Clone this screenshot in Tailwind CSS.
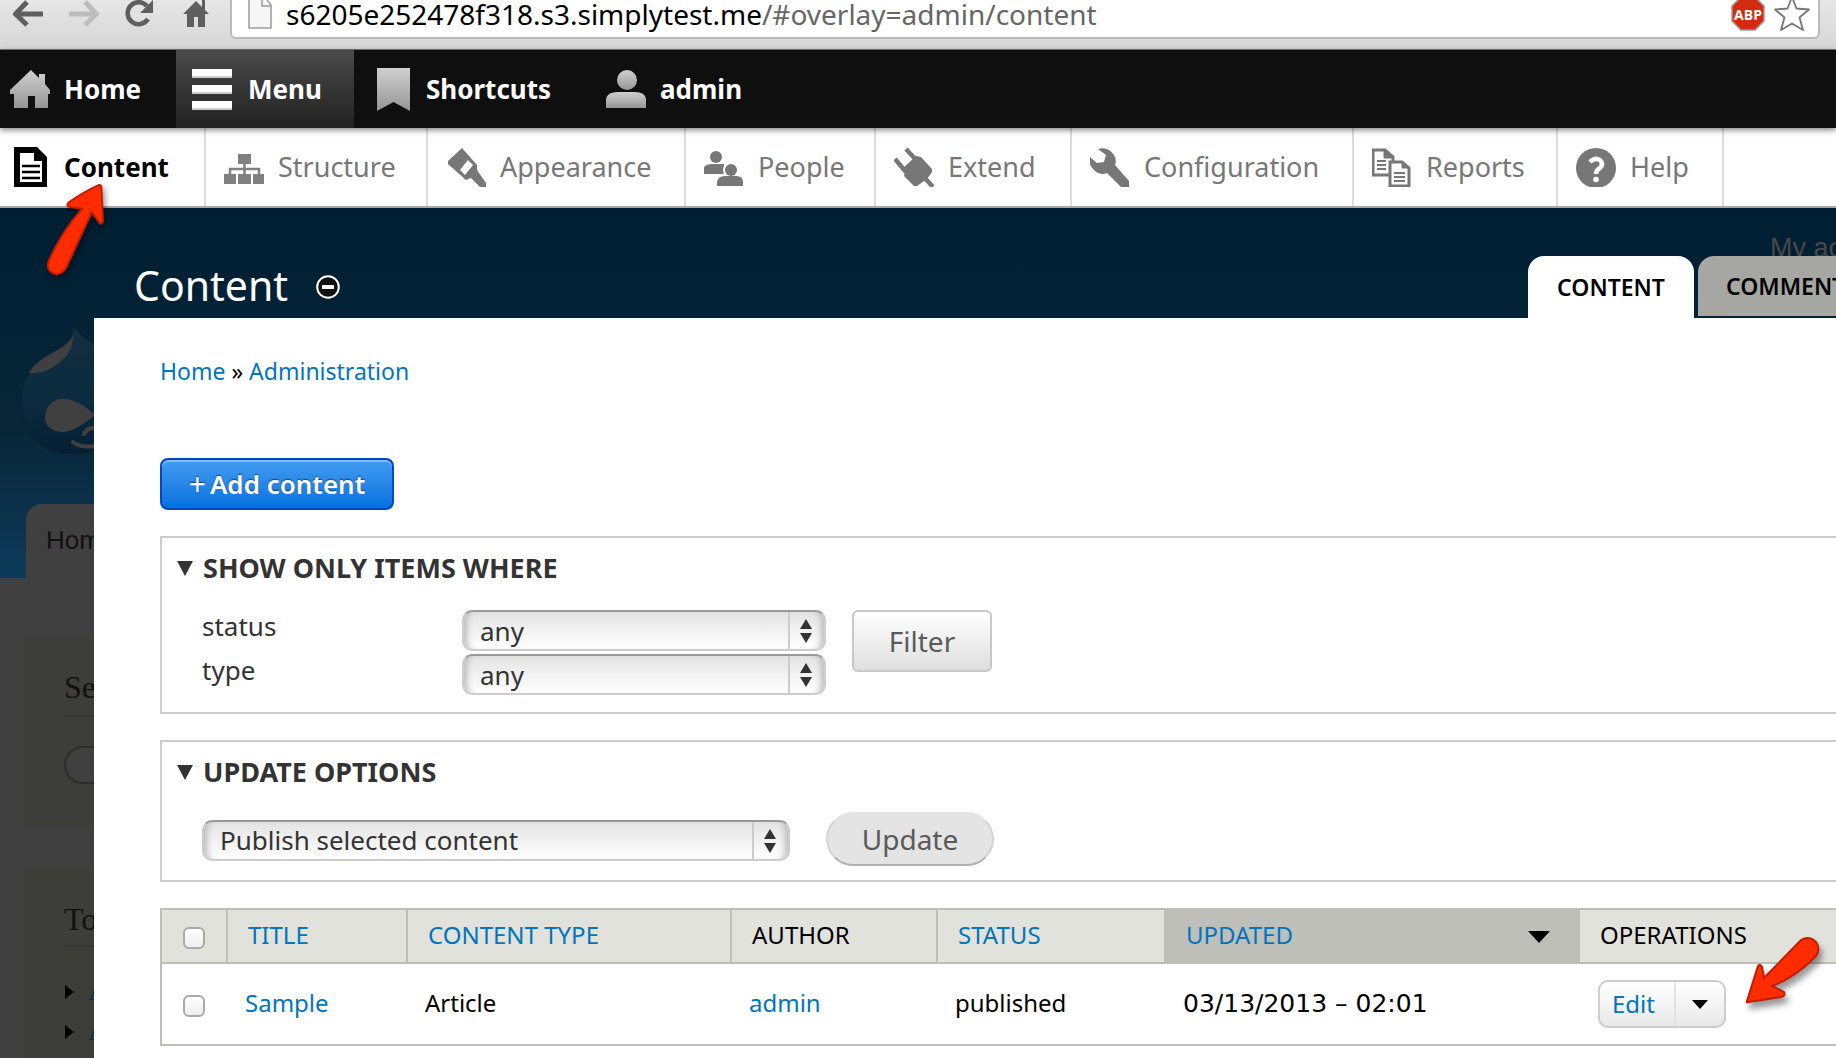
<!DOCTYPE html>
<html lang="en">
<head>
    <meta charset="UTF-8">
    <meta name="viewport" content="width=device-width, initial-scale=1.0">
    <title>Content | Administration</title>
    <script src="https://cdn.jsdelivr.net/npm/@tailwindcss/browser@4"></script>
</head>
<body class="relative min-h-screen overflow-hidden bg-[#404040] font-['Noto_Sans',sans-serif] text-black">

    <!-- Browser bar -->
    <div class="flex h-[50px] items-start overflow-hidden border-b border-[#777] bg-linear-to-b from-[#e6e6e6] to-[#d6d6d6] pl-3 pr-4">
        <div class="flex w-[218px] shrink-0 gap-6">
            <button aria-label="Back">
                <svg class="h-7 w-8" viewBox="0 0 32 28" fill="none" stroke="#5f5f5f" stroke-width="5"><path d="M3 14H31M15 2L3.500 14L15 25" stroke-linejoin="round"/></svg>
            </button>
            <button aria-label="Forward">
                <svg class="h-7 w-8" viewBox="0 0 32 28" fill="none" stroke="#bdbdbd" stroke-width="5"><path d="M1 14H28M17 2L28.500 14L17 25" stroke-linejoin="round"/></svg>
            </button>
            <button aria-label="Reload">
                <svg class="h-7 w-8" viewBox="0 0 32 28" fill="none"><path d="M24 19A11 11 0 1 1 23 6" stroke="#5f5f5f" stroke-width="4.500"/><path d="M29 0V13H16Z" fill="#5f5f5f"/></svg>
            </button>
            <button aria-label="Home page">
                <svg class="h-7 w-8" viewBox="0 0 32 28" fill="#5f5f5f"><path d="M16 1L22 7V0H25V10L29 14H25V27H18V17H14V27H7V14H3Z"/></svg>
            </button>
        </div>
        <div class="-mt-4 flex h-[55px] grow items-center rounded-md border-2 border-[#bbb] bg-white pl-4 pr-2 pt-1">
            <svg class="mr-[14px] h-[30px] w-6 shrink-0" viewBox="0 0 24 30"><path d="M1 -6H14L23 6V29H1Z" fill="#f6f6f6" stroke="#999" stroke-width="1.500"/><path d="M14 -3V7H23" fill="none" stroke="#999" stroke-width="1.500"/></svg>
            <div class="grow whitespace-nowrap text-[28px] leading-8" role="textbox" aria-label="Address" contenteditable="true" spellcheck="false">s6205e252478f318.s3.simplytest.me<span class="text-[#666]">/#overlay=admin/content</span></div>
            <button class="mr-2 shrink-0" aria-label="Adblock Plus">
                <svg class="h-9 w-9" viewBox="0 0 36 36"><path d="M11 1H25L34 10V25L25 34H11L2 25V10Z" fill="#d42a10" stroke="#999" stroke-width="1.500"/><text x="18" y="24" text-anchor="middle" font-family="Open Sans" font-size="14" font-weight="700" fill="#fff">ABP</text></svg>
            </button>
            <button class="shrink-0" aria-label="Bookmark this page">
                <svg class="h-9 w-9" viewBox="0 0 36 36"><path d="M18 1L22.500 12.500L35 13.500L25.500 21.500L29 34L18 27.500L7 34L10.500 21.500L1 13.500L13.500 12.500Z" fill="#fff" stroke="#777" stroke-width="1.800" stroke-linejoin="round"/></svg>
            </button>
        </div>
    </div>

    <!-- Toolbar -->
    <nav class="relative z-10 flex h-[78px] bg-[#0f0f0f] text-[26px] font-bold text-white shadow-[0_2px_6px_rgba(0,0,0,0.5)]">
        <svg class="absolute h-0 w-0"><defs><linearGradient id="grey" x1="0" y1="0" x2="0" y2="1"><stop offset="0" stop-color="#d0d0d0"/><stop offset="1" stop-color="#959595"/></linearGradient></defs></svg>
        <a href="#" class="flex w-[176px] shrink-0 items-center gap-[14px] pl-[10px]">
            <svg class="h-[38px] w-10" viewBox="0 0 40 38"><path d="M21 0L29 8V4H35V14L40 20V24H38V38H25V26H18V38H4V24H0V20Z" fill="url(#grey)"/></svg>
            Home
        </a>
        <a href="#" class="flex w-[178px] shrink-0 items-center gap-4 bg-linear-to-b from-[#4b4b4b] to-[#212121] pl-4">
            <svg class="h-[44px] w-10" viewBox="0 -2 40 44" fill="#fff"><path d="M0 0H40V9H0ZM0 16H40V25H0ZM0 32H40V41H0Z"/><path d="M0 7H40V9H0ZM0 23H40V25H0ZM0 39H40V41H0Z" fill="#ccc"/></svg>
            Menu
        </a>
        <a href="#" class="flex w-[236px] shrink-0 items-center gap-3 pl-5">
            <svg class="h-11 w-10" viewBox="0 -1 40 44"><path d="M3 0H36V43L19.500 34L3 43Z" fill="url(#grey)"/></svg>
            Shortcuts
        </a>
        <a href="#" class="flex shrink-0 items-center gap-[14px] pl-4">
            <svg class="h-[38px] w-10" viewBox="0 0 40 38"><ellipse cx="21" cy="10" rx="10" ry="10" fill="url(#grey)"/><path d="M0 38V29Q1 22 12 22H29Q39 22 40 29V38Z" fill="url(#grey)"/></svg>
            admin
        </a>
    </nav>

    <nav class="relative flex h-20 border-b-2 border-[#a6a6a6] bg-white text-[27px] text-[#777]">
        <a href="#" class="flex w-[206px] shrink-0 items-center gap-[14px] border-r-2 border-[#ddd] pl-[10px] text-[26px] font-bold text-black">
            <svg class="h-10 w-10" viewBox="0 0 40 40"><path d="M4 0H27L37 10V40H4Z" fill="#000"/><path d="M10 6H24V14H32V35H10Z" fill="#fff"/><path d="M12 19H30M12 25H30M12 31H30" stroke="#000" stroke-width="2.500"/></svg>
            Content
        </a>
        <a href="#" class="flex w-[222px] shrink-0 items-center gap-[14px] border-r-2 border-[#ddd] pl-[18px]">
            <svg class="h-10 w-10" viewBox="0 -1 40 40" fill="#808080"><path d="M14 6H27V16H14ZM0 26H12V36H0ZM14 26H27V36H14ZM29 26H40V36H29Z"/><path d="M20.500 14V27M6 27V21H35V27" fill="none" stroke="#808080" stroke-width="2.500"/></svg>
            Structure
        </a>
        <a href="#" class="flex w-[258px] shrink-0 items-center gap-[14px] border-r-2 border-[#ddd] pl-[18px]">
            <svg class="h-10 w-10" viewBox="0 -1 40 40"><path d="M16 0L31 17V22L40 35V40H35L25 30L20 32L2 16V13Z" fill="#777"/><path d="M22 12L27 17L19 27L14 22Z" fill="#fff"/></svg>
            Appearance
        </a>
        <a href="#" class="flex w-[190px] shrink-0 items-center gap-[14px] border-r-2 border-[#ddd] pl-[18px]">
            <svg class="h-10 w-10" viewBox="1 -1 40 40" fill="#777"><circle cx="13" cy="9" r="6"/><path d="M0 26V22Q1 16 9 16H21V26Z"/><circle cx="28" cy="22" r="8" fill="#fff"/><circle cx="28" cy="22" r="6"/><path d="M14 38V34Q15 28 22 28H33Q40 28 40 34V38Z"/></svg>
            People
        </a>
        <a href="#" class="flex w-[196px] shrink-0 items-center gap-[14px] border-r-2 border-[#ddd] pl-[18px]">
            <svg class="h-10 w-10" viewBox="0 -1 40 40"><path d="M12 1L23 13M1 11L12 24M30 29L39 39" stroke="#777" stroke-width="4.500"/><path d="M22 8L27 9L38 21V24L33 31L23 38H20L10 28L11 24L7 22Z" fill="#777"/></svg>
            Extend
        </a>
        <a href="#" class="flex w-[282px] shrink-0 items-center gap-[14px] border-r-2 border-[#ddd] pl-[18px]">
            <svg class="h-10 w-10" viewBox="1 -1 40 40"><path d="M9 1Q19 -2 25 7Q28 12 26 17L40 33V40H33L18 25Q10 28 4 21Q-1 15 0 8L8 15L15 14L17 7Z" fill="#777"/></svg>
            Configuration
        </a>
        <a href="#" class="flex w-[204px] shrink-0 items-center gap-[14px] border-r-2 border-[#ddd] pl-[18px]">
            <svg class="h-10 w-10" viewBox="1 -1 40 40" fill="none" stroke="#777"><path d="M2 2H14L22 9V27H2Z" stroke-width="3"/><path d="M13 1V10H23Z" fill="#777"/><path d="M6 13H15M6 17H15M6 21H15" stroke-width="2"/><path d="M19 14H31L38 20V38H19Z" fill="#fff" stroke-width="3"/><path d="M31 13V20H38Z" fill="#777"/><path d="M23 25H34M23 29H34M23 33H34" stroke-width="2"/></svg>
            Reports
        </a>
        <a href="#" class="flex w-[166px] shrink-0 items-center gap-[14px] border-r-2 border-[#ddd] pl-[18px]">
            <svg class="h-10 w-10" viewBox="0 -1 40 40"><circle cx="20" cy="20" r="20" fill="#777"/><path d="M14 14Q19 9 24 12Q28 16 24 20Q20 22 20 26" fill="none" stroke="#fff" stroke-width="4.500"/><circle cx="20" cy="31.500" r="2.800" fill="#fff"/></svg>
            Help
        </a>
    </nav>

    <!-- Overlay on top of the dimmed site -->
    <div class="relative bg-linear-to-b from-[#001e32] via-[#082638] via-60% to-[#0e3b5b] bg-[length:100%_370px] bg-no-repeat">
        <a href="#" class="absolute right-[-72px] top-6 font-['Liberation_Sans',sans-serif] text-[27px] leading-8 text-[#484848]">My account</a>
        <header class="relative flex h-[110px] items-end justify-between pl-[134px]">
            <div class="flex items-center gap-7 pb-1 text-white">
                <h1 class="text-[41px] leading-[58px]">Content</h1>
                <button aria-label="Remove from shortcuts" class="pt-1">
                    <svg class="h-6 w-6" viewBox="0 0 24 24"><circle cx="12" cy="12" r="10.800" fill="#111" stroke="#fff" stroke-width="2"/><path d="M6 12H18" stroke="#fff" stroke-width="4"/></svg>
                </button>
            </div>
            <div class="mr-[-48px] flex shrink-0 gap-1 text-[23px] font-semibold">
                <a href="#" class="flex h-[62px] w-[166px] items-center justify-center rounded-t-2xl bg-white">CONTENT</a>
                <a href="#" class="flex h-[60px] w-[186px] items-center rounded-t-2xl bg-[#a6a7a2] pl-7">COMMENTS</a>
            </div>
        </header>

        <div class="flex">
            <!-- Site underneath -->
            <aside class="w-[94px] shrink-0 overflow-hidden whitespace-nowrap font-['Liberation_Serif',serif] text-[32px] text-[#111]">
                <svg class="block h-[186px] w-[94px]" viewBox="0 0 94 186">
                    <defs><linearGradient id="drop" x1="0" y1="0" x2="0" y2="1"><stop offset="0" stop-color="#142f40"/><stop offset="0.600" stop-color="#0b2b40"/><stop offset="1" stop-color="#041f33"/></linearGradient></defs>
                    <path d="M74 8Q75 20 58 31Q21 52 21 81Q22 136 76 136Q130 134 131 81Q130 50 92 25Q78 16 74 8Z" fill="url(#drop)" stroke="#0b2130"/>
                    <path d="M73 10Q76 22 58 32Q35 43 29 55Q46 57 62 42Q75 32 73 10Z" fill="#404040"/>
                    <path d="M94 96Q75 79 60 81Q46 84 45 100Q46 113 62 114Q72 115 94 98Z" fill="#404040"/>
                    <path d="M84 116Q88 109 95 110M73 124Q80 130 95 128" fill="none" stroke="#404040" stroke-width="4" stroke-linecap="round"/>
                </svg>
                <div class="ml-[26px] h-[74px] rounded-tl-2xl bg-[#404040] pl-5 pt-5 font-['Liberation_Sans',sans-serif] text-[26px] leading-8">Home</div>
                <div class="bg-[#404040] pl-6 pt-[60px]">
                    <section class="h-[188px] bg-[#3d3d3a] pl-10 pt-[31px]">
                        <h2 class="border-b-2 border-[#363636] pb-[10px] leading-9">Search</h2>
                        <input type="text" aria-label="Search" class="mt-[29px] block h-[38px] w-48 rounded-full border-2 border-[#2c2c2c] bg-[#404040]">
                    </section>
                    <section class="mt-11 h-[190px] bg-[#3d3d3a] pl-10 pt-[31px]">
                        <h2 class="border-b-2 border-[#363636] pb-2 leading-9">Tools</h2>
                        <ul class="pt-[25px] text-[26px] leading-10">
                            <li class="flex items-center gap-[14px]"><svg class="h-[14px] w-[10px] shrink-0" viewBox="0 0 10 14"><path d="M1 0L10 7L1 14Z"/></svg><a href="#" class="text-[#00304f]">Add content</a></li>
                            <li class="flex items-center gap-[14px]"><svg class="h-[14px] w-[10px] shrink-0" viewBox="0 0 10 14"><path d="M1 0L10 7L1 14Z"/></svg><a href="#" class="text-[#00304f]">Administration</a></li>
                        </ul>
                    </section>
                </div>
            </aside>

            <main class="grow overflow-hidden bg-white pl-[66px]">
                <div class="pt-[35px] text-[23px] leading-9">
                    <a href="#" class="text-[#0074bd]">Home</a> » <a href="#" class="text-[#0074bd]">Administration</a>
                </div>

                <button class="mt-[69px] flex h-[52px] w-[234px] items-center justify-center gap-1 rounded-lg border-2 border-[#0048c8] bg-linear-to-b from-[#419cf1] to-[#0071de] text-[26px] font-semibold text-white shadow-[inset_0_2px_0_rgba(255,255,255,0.35)] text-shadow-[0_-1px_1px_rgba(0,0,0,0.5)]">
                    <span class="text-[30px] font-normal leading-8">+</span>Add content
                </button>

                <details open class="mt-[26px] h-[178px] border-2 border-r-0 border-[#ccc] text-[26px] text-[#333]">
                    <summary class="flex list-none items-center gap-[10px] pl-[15px] pt-3 text-[27px] font-bold leading-9">
                        <svg class="h-4 w-4" viewBox="0 0 16 16" fill="#333"><path d="M0 1H16L8 16Z"/></svg>
                        SHOW ONLY ITEMS WHERE
                    </summary>
                    <form class="flex gap-[26px] pl-10 pt-6">
                        <div class="grid grid-cols-[260px_364px] gap-y-[3px]">
                            <label for="status" class="-mt-1 leading-[41px]">status</label>
                            <div class="relative">
                                <select id="status" class="block h-[41px] w-full appearance-none rounded-[10px] border-2 border-[#ccc] border-t-[#999] bg-linear-to-b from-[#e3e3e3] to-white pl-4 leading-8 shadow-[inset_8px_0_6px_-5px_#bbb,inset_-8px_0_6px_-5px_#bbb]"><option>any</option></select>
                                <svg class="pointer-events-none absolute right-0 top-0 h-[41px] w-[38px]" viewBox="0 0 38 41"><path d="M1 2V39" stroke="#ccc" stroke-width="2"/><path d="M12 19L18 9L24 19ZM12 23L18 33L24 23Z" fill="#333"/></svg>
                            </div>
                            <label for="type" class="-mt-1 leading-[41px]">type</label>
                            <div class="relative">
                                <select id="type" class="block h-[41px] w-full appearance-none rounded-[10px] border-2 border-[#ccc] border-t-[#999] bg-linear-to-b from-[#e3e3e3] to-white pl-4 leading-8 shadow-[inset_8px_0_6px_-5px_#bbb,inset_-8px_0_6px_-5px_#bbb]"><option>any</option></select>
                                <svg class="pointer-events-none absolute right-0 top-0 h-[41px] w-[38px]" viewBox="0 0 38 41"><path d="M1 2V39" stroke="#ccc" stroke-width="2"/><path d="M12 19L18 9L24 19ZM12 23L18 33L24 23Z" fill="#333"/></svg>
                            </div>
                        </div>
                        <button type="button" class="h-[62px] w-[140px] rounded-md border-2 border-[#c8c8c8] bg-linear-to-b from-white to-[#dfdfdf] text-[28px] text-[#5a5a5a]">Filter</button>
                    </form>
                </details>

                <details open class="mt-[26px] h-[142px] border-2 border-r-0 border-[#ccc] text-[26px] text-[#333]">
                    <summary class="flex list-none items-center gap-[10px] pl-[15px] pt-3 text-[27px] font-bold leading-9">
                        <svg class="h-4 w-4" viewBox="0 0 16 16" fill="#333"><path d="M0 1H16L8 16Z"/></svg>
                        UPDATE OPTIONS
                    </summary>
                    <form class="flex items-center gap-9 pl-10 pt-[22px]">
                        <div class="relative w-[588px] pt-[2px]">
                            <select aria-label="Update options" class="block h-[41px] w-full appearance-none rounded-[10px] border-2 border-[#ccc] border-t-[#999] bg-linear-to-b from-[#e3e3e3] to-white pl-4 leading-8 shadow-[inset_8px_0_6px_-5px_#bbb,inset_-8px_0_6px_-5px_#bbb]"><option>Publish selected content</option></select>
                            <svg class="pointer-events-none absolute bottom-0 right-0 h-[41px] w-[38px]" viewBox="0 0 38 41"><path d="M1 2V39" stroke="#ccc" stroke-width="2"/><path d="M12 19L18 9L24 19ZM12 23L18 33L24 23Z" fill="#333"/></svg>
                        </div>
                        <button type="button" class="h-[54px] w-[168px] rounded-full border-2 border-[#d4d4d4] border-b-[#b0b0b0] border-t-[#e4e4e4] bg-[#e4e4e4] text-[28px] text-[#5a5a5a]">Update</button>
                    </form>
                </details>

                <table class="mt-[26px] w-full table-fixed border-collapse border-2 border-r-0 border-[#bebfb9] text-left text-[24px]">
                    <colgroup>
                        <col class="w-[66px]"><col class="w-[180px]"><col class="w-[324px]"><col class="w-[206px]"><col class="w-[228px]"><col class="w-[415px]"><col>
                    </colgroup>
                    <thead>
                        <tr class="h-[54px] border-2 border-r-0 border-[#bebfb9] bg-[#e1e2dc]">
                            <th class="border-r-2 border-[#bebfb9]"><input type="checkbox" aria-label="Select all rows" class="mx-auto mt-1 block size-[22px] appearance-none rounded-md border-2 border-[#aaa] bg-linear-to-b from-white to-[#eee]"></th>
                            <th class="border-r-2 border-[#bebfb9] pb-[2px] pl-5 font-normal"><a href="#" class="text-[#0074bd]">TITLE</a></th>
                            <th class="border-r-2 border-[#bebfb9] pb-[2px] pl-5 font-normal"><a href="#" class="text-[#0074bd]">CONTENT TYPE</a></th>
                            <th class="border-r-2 border-[#bebfb9] pb-[2px] pl-5 font-normal">AUTHOR</th>
                            <th class="border-r-2 border-[#bebfb9] pb-[2px] pl-5 font-normal"><a href="#" class="text-[#0074bd]">STATUS</a></th>
                            <th class="bg-[#bebfb9] pb-[2px] pl-5 pr-[30px] font-normal">
                                <a href="#" class="flex items-center justify-between text-[#0074bd]">UPDATED
                                    <svg class="h-4 w-[22px]" viewBox="0 -4 22 16" fill="#000"><path d="M0 0H22L11 12Z"/></svg>
                                </a>
                            </th>
                            <th class="pb-[2px] pl-5 font-normal">OPERATIONS</th>
                        </tr>
                    </thead>
                    <tbody>
                        <tr class="h-[82px] border-b-2 border-[#bebfb9]">
                            <td class="pr-[2px]"><input type="checkbox" aria-label="Select Sample" class="mx-auto mt-1 block size-[22px] appearance-none rounded-md border-2 border-[#aaa] bg-linear-to-b from-white to-[#eee]"></td>
                            <td class="pb-[2px] pl-[18px]"><a href="#" class="text-[#0074bd]">Sample</a></td>
                            <td class="pb-[2px] pl-[18px]">Article</td>
                            <td class="pb-[2px] pl-[18px]"><a href="#" class="text-[#0074bd]">admin</a></td>
                            <td class="pb-[2px] pl-[18px]">published</td>
                            <td class="pl-[18px] font-['DejaVu_Sans',sans-serif] text-[25px]">03/13/2013 – 02:01</td>
                            <td class="pl-[18px]">
                                <div class="flex h-12 w-32 items-stretch rounded-[10px] border-2 border-[#ccc] bg-linear-to-b from-white to-[#e8e8e8]">
                                    <a href="#" class="flex w-[76px] items-center border-r-2 border-[#e2e2e2] pl-3 text-[#0074bd]">Edit</a>
                                    <button aria-label="More operations" class="flex grow items-center justify-center">
                                        <svg class="h-[9px] w-4" viewBox="0 0 16 9" fill="#000"><path d="M0 0H16L8 9Z"/></svg>
                                    </button>
                                </div>
                            </td>
                        </tr>
                    </tbody>
                </table>
            </main>
        </div>
    </div>

    <!-- Callout arrows -->
    <svg class="absolute left-[45px] top-[180px] z-20 h-[97px] w-[63px] drop-shadow-[2px_3px_3px_rgba(0,0,0,0.45)]" viewBox="135 390 190 290">
        <path d="M297 404Q304 402 305 410L310 512Q307 524 300 519L276 486L198 655Q180 678 158 670Q137 657 146 633Q185 545 247 475L208 470Q198 465 206 457Q250 425 297 404Z" fill="#ff2c00" stroke="#c41c00" stroke-width="6"/>
    </svg>
    <svg class="absolute right-1.5 top-[930px] z-20 h-[90px] w-[90px] drop-shadow-[3px_6px_3px_rgba(0,0,0,0.4)]" viewBox="1740 930 90 90">
        <path d="M1747 1001L1758 966Q1760 963 1762 967L1764 978L1801 940Q1809 935 1816 942Q1821 949 1816 956Q1796 977 1772 986L1784 992Q1786 996 1781 997L1749 1002Q1746 1003 1747 1001Z" fill="#ff2c00" stroke="#c41c00" stroke-width="2"/>
    </svg>
</body>
</html>
